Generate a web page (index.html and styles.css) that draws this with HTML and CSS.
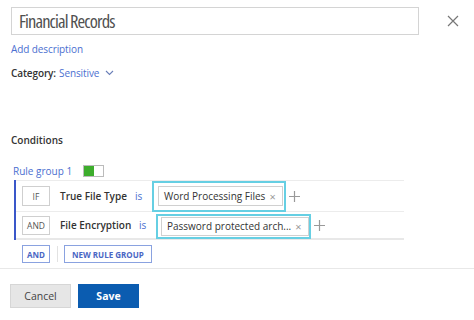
FILE: index.html
```html
<!DOCTYPE html>
<html>
<head>
<meta charset="utf-8">
<link rel="stylesheet" href="styles.css">
</head>
<body>
<div class="dialog">
  <div class="head">
    <div class="title-input">Financial Records</div>
    <svg class="close" width="12" height="12" viewBox="0 0 12 12"><path d="M1 1L11 11M11 1L1 11" stroke="#777" stroke-width="1.2" fill="none"/></svg>
  </div>
  <div class="link add-desc">Add description</div>
  <div class="category"><span class="lbl">Category:</span> <span class="link">Sensitive</span>
    <svg class="chev" width="9" height="6" viewBox="0 0 9 6"><path d="M1 1L4.5 4.5L8 1" stroke="#6a7fb8" stroke-width="1.1" fill="none"/></svg>
  </div>
  <div class="conditions">Conditions</div>
  <div class="group-head"><span class="link">Rule group 1</span><span class="toggle"><span class="on"></span></span></div>
  <div class="group">
    <div class="row r1">
      <span class="op">IF</span>
      <span class="field">True File Type</span>
      <span class="is">is</span>
      <span class="hl h1"><span class="tag">Word Processing Files <span class="x">×</span></span></span>
      <svg class="plus" width="11" height="11" viewBox="0 0 11 11"><path d="M5.5 0V11M0 5.5H11" stroke="#999" stroke-width="1.2" fill="none"/></svg>
    </div>
    <div class="row r2">
      <span class="op">AND</span>
      <span class="field">File Encryption</span>
      <span class="is">is</span>
      <span class="hl h2"><span class="tag">Password protected arch... <span class="x">×</span></span></span>
      <svg class="plus" width="11" height="11" viewBox="0 0 11 11"><path d="M5.5 0V11M0 5.5H11" stroke="#999" stroke-width="1.2" fill="none"/></svg>
    </div>
  </div>
  <div class="actions">
    <span class="btn-o and">AND</span>
    <span class="sep"></span>
    <span class="btn-o">NEW RULE GROUP</span>
  </div>
</div>
<div class="footer">
  <span class="btn cancel">Cancel</span>
  <span class="btn save">Save</span>
</div>
</body>
</html>
```
FILE: styles.css
```css
* { box-sizing: border-box; }
body { margin: 0; background: #fff; font-family: "Open Sans", "DejaVu Sans", sans-serif; color: #333; width: 474px; height: 320px; overflow: hidden; }
.dialog { padding: 7px 0 0 11px; height: 269px; border-bottom: 1px solid #e8e8e8; }
.head { display: flex; align-items: center; }
.title-input { width: 408px; height: 28px; border: 1px solid #d4d4d4; font-size: 18.5px; font-stretch: 80%; letter-spacing: -0.9px; color: #505050; padding-left: 7px; line-height: 26px; }
.close { margin-left: 28px; }
.link { color: #4b6fd0; }
.add-desc { font-size: 10px; margin-top: 6px; line-height: 16px; letter-spacing: -0.1px; }
.category { font-size: 10px; margin-top: 8px; line-height: 16px; display: flex; align-items: center; gap: 3px; letter-spacing: -0.1px; }
.category .lbl { color: #333; font-weight: 600; }
.chev { margin-left: 3px; }
.conditions { font-size: 10px; font-weight: 600; margin-top: 51px; line-height: 16px; color: #333; }
.group-head { font-size: 10px; margin-top: 16px; line-height: 14px; display: flex; align-items: center; padding-left: 2px; }
.toggle { margin-left: 11px; width: 21px; height: 12px; border: 1px solid #bbb; display: flex; }
.toggle .on { width: 10px; height: 10px; background: #3dad2c; }
.group { margin-top: 2px; margin-left: 3px; border-left: 2px solid #3a57c9; width: 390px; }
.row { display: flex; align-items: center; font-size: 10px; height: 31px; border-top: 1px solid #ececec; padding-left: 6px; }
.row.r2 { height: 29px; border-bottom: 2px solid #e8e8e8; }
.op { width: 28px; height: 20px; border: 1px solid #cfcfcf; font-size: 8.5px; color: #555; display: flex; align-items: center; justify-content: center; }
.r2 .op { height: 19px; }
.field { font-weight: 600; color: #333; margin-left: 10px; white-space: nowrap; }
.r1 .field { width: 75px; }
.r2 .field { width: 79px; }
.is { color: #4b6fd0; width: 7px; }
.hl { border: 2px solid #66cfe3; display: flex; align-items: center; padding: 0 4px; }
.h1 { margin-left: 10px; height: 31px; width: 134px; }
.h2 { margin-left: 10px; height: 25px; width: 155px; margin-top: 2px; padding: 0 4px 0 3px; }
.tag { border: 1px solid #d0d0d0; height: 20px; display: flex; align-items: center; justify-content: space-between; padding: 0 6px 0 5px; color: #333; white-space: nowrap; flex: 1; }
.h2 .tag { height: 19px; }
.x { color: #999; font-size: 11px; margin-left: 4px; }
.plus { margin-left: 3px; }
.actions { display: flex; align-items: center; margin-top: 5px; margin-left: 11px; height: 18px; }
.btn-o { border: 1px solid #8aa2e0; color: #4a66c4; font-size: 8px; font-weight: 700; height: 18px; display: flex; align-items: center; justify-content: center; padding: 0 7px; }
.btn-o.and { width: 28px; padding: 0; }
.sep { width: 1px; height: 16px; background: #e2e2e2; margin: 0 6px 0 7px; }
.footer { display: flex; gap: 7px; padding: 15px 0 0 10px; }
.btn { width: 61px; height: 24px; display: flex; align-items: center; justify-content: center; font-size: 10.5px; }
.cancel { background: #e6e6e6; border: 1px solid #d6d6d6; color: #444; }
.save { background: #0b5cb0; color: #fff; font-weight: 700; }
```
